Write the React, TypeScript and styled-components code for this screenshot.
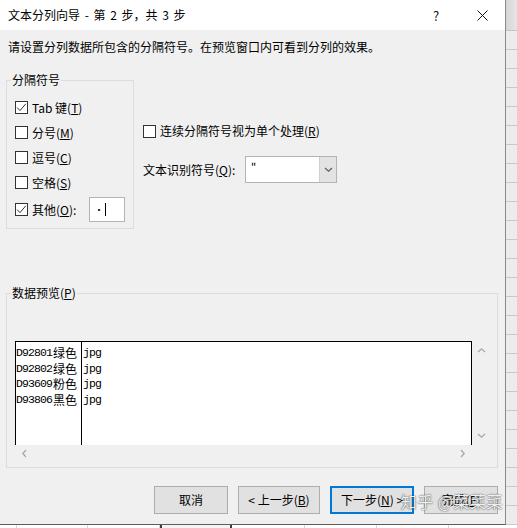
import React from "react";
import styled, { createGlobalStyle } from "styled-components";

const GlobalStyle = createGlobalStyle`
  html, body { margin: 0; padding: 0; background: #ffffff; }
  body {
    font-family: "Noto Sans CJK SC", "Noto Sans", sans-serif;
    font-size: 12px;
    color: #000;
  }
  * { box-sizing: border-box; }
`;

const UI_FONT = `"Noto Sans CJK SC", "Noto Sans", sans-serif`;

const Screen = styled.div`
  width: 517px;
  height: 528px;
  display: flex;
  flex-direction: column;
  overflow: hidden;
`;

const TopArea = styled.div`
  display: flex;
  height: 525px;
`;

const Dialog = styled.div`
  position: relative;
  width: 506px;
  height: 525px;
  display: flex;
  flex-direction: column;
  background: #f0f0f0;
  border-right: 1px solid #8a8a8a;
  border-bottom: 1px solid #5e5e5e;
  font-family: ${UI_FONT};
`;

const TitleBar = styled.div`
  height: 30px;
  flex: 0 0 30px;
  background: #ffffff;
  display: flex;
  align-items: center;
`;

const TitleText = styled.div`
  flex: 1;
  padding-left: 8px;
  line-height: 16px;
  font-size: 12px;
  white-space: pre;
  word-spacing: 2px;
`;

const TitleButton = styled.div`
  width: 46px;
  height: 30px;
  display: flex;
  align-items: center;
  justify-content: center;
  font-size: 13px;
  color: #111;
`;

const Body = styled.div`
  flex: 1;
  display: flex;
  flex-direction: column;
  padding: 0 7px 10px 6px;
`;

const Instruction = styled.div`
  margin: 9px 0 0 2px;
  line-height: 16px;
  white-space: nowrap;
`;

const OptionsRow = styled.div`
  display: flex;
  align-items: flex-start;
  margin-top: 17px;
`;

const Group = styled.fieldset<{ $w?: number }>`
  margin: 0;
  min-width: 0;
  width: ${(p) => (p.$w ? `${p.$w}px` : "auto")};
  border: 1px solid #dcdcdc;
  font-family: ${UI_FONT};
  font-size: 12px;
`;

const DelimGroup = styled(Group)`
  padding: 7px 8px 6px 8px;
`;

const PreviewGroup = styled(Group)`
  margin-top: 56px;
  padding: 40px 7px 6px 8px;
`;

const Legend = styled.legend`
  margin-left: -4px;
  padding: 0 1px;
  line-height: 16px;
  color: #000;
`;

const CheckRow = styled.div<{ $h?: number; $mt?: number }>`
  display: flex;
  align-items: center;
  gap: 4px;
  height: ${(p) => p.$h ?? 25}px;
  margin-top: ${(p) => p.$mt ?? 0}px;
  line-height: 16px;
  white-space: nowrap;
`;

const Box = styled.span`
  width: 13px;
  height: 13px;
  flex: 0 0 13px;
  border: 1px solid #333333;
  background: #ffffff;
  display: flex;
  align-items: center;
  justify-content: center;
`;

const OtherInput = styled.div`
  margin-left: auto;
  width: 36px;
  height: 25px;
  background: #ffffff;
  border: 1px solid #b4b4b4;
  display: flex;
  align-items: center;
  padding-left: 4px;
`;

const InputDot = styled.span`
  font-size: 10px;
  line-height: 10px;
  margin-right: 1px;
`;

const Caret = styled.span`
  width: 1px;
  height: 13px;
  background: #000;
`;

const RightColumn = styled.div`
  margin-left: 9px;
  padding-top: 49px;
  display: flex;
  flex-direction: column;
`;

const QualifierRow = styled.div`
  display: flex;
  align-items: center;
  gap: 10px;
  margin-top: 15px;
`;

const QualLabel = styled.span`
  width: 92px;
  line-height: 16px;
  white-space: nowrap;
`;

const Combo = styled.div`
  width: 92px;
  height: 27px;
  display: flex;
  background: #ffffff;
  border: 1px solid #b4b4b4;
`;

const ComboValue = styled.div`
  flex: 1;
  padding: 4px 0 0 5px;
  font-size: 11px;
  line-height: 11px;
`;

const ComboButton = styled.div`
  width: 17px;
  background: #e3e3e3;
  border-left: 1px solid #cfcfcf;
  display: flex;
  align-items: center;
  justify-content: center;
`;

const ScrollBox = styled.div`
  display: grid;
  grid-template-columns: 1fr 18px;
  grid-template-rows: 104px 16px;
`;

const PreviewContent = styled.div`
  background: #ffffff;
  border: 1px solid #000;
  border-bottom: none;
  display: flex;
`;

const PreviewColumn = styled.div<{ $w?: number; $divider?: boolean }>`
  ${(p) => (p.$w ? `width: ${p.$w}px; flex: 0 0 ${p.$w}px;` : "flex: 1;")}
  ${(p) => (p.$divider ? "border-right: 1px solid #000;" : "")}
  padding: 3px 0 0 ${(p) => (p.$divider ? 0 : 1)}px;
  display: flex;
  flex-direction: column;
`;

const Cell = styled.div`
  height: 15.7px;
  line-height: 15.7px;
  white-space: nowrap;
  display: flex;
  align-items: center;
`;

const Latin = styled.span`
  font-family: "Liberation Mono", "DejaVu Sans Mono", monospace;
  font-size: 11.5px;
  letter-spacing: -0.9px;
`;

const Cjk = styled.span`
  font-family: "Noto Sans CJK SC", sans-serif;
  font-size: 12px;
  margin-left: 1px;
`;

const VScroll = styled.div`
  display: flex;
  flex-direction: column;
  justify-content: space-between;
  align-items: center;
  padding: 5px 0 5px 0;
`;

const HScroll = styled.div`
  display: flex;
  justify-content: space-between;
  align-items: center;
  padding: 0 5px 0 5px;
`;

const ButtonRow = styled.div`
  display: flex;
  justify-content: flex-end;
  gap: 10px;
  margin-top: 18px;
`;

const Button = styled.div<{ $w: number; $primary?: boolean }>`
  width: ${(p) => p.$w}px;
  height: 28px;
  background: #e1e1e1;
  border: ${(p) => (p.$primary ? "2px solid #0078d7" : "1px solid #adadad")};
  display: flex;
  align-items: center;
  justify-content: center;
  line-height: 16px;
  white-space: pre;
`;

const Watermark = styled.div`
  position: absolute;
  right: 2px;
  bottom: 13px;
  font-family: "Noto Sans CJK SC", sans-serif;
  font-size: 16px;
  line-height: 20px;
  color: rgba(255, 255, 255, 0.92);
  text-shadow: 0 0 1px #4a4a4a, 0 0 2px rgba(0, 0, 0, 0.45);
  white-space: pre;
  letter-spacing: 0.5px;
`;

const SheetEdge = styled.div`
  flex: 1;
  display: flex;
  flex-direction: column;
`;

const SheetHeader = styled.div`
  height: 31px;
  background: linear-gradient(to right, #d6d6d6, #e6e6e6);
  border-bottom: 1px solid #c3c3c3;
`;

const SheetRows = styled.div`
  flex: 1;
  background: repeating-linear-gradient(
    to bottom,
    #ececec 0px,
    #ececec 18px,
    #c8c8c8 18px,
    #c8c8c8 19px
  );
`;

const SheetBottom = styled.div`
  height: 3px;
  display: flex;
  background: #ffffff;
`;

const SheetCell = styled.div<{ $w: number; $selected?: boolean }>`
  width: ${(p) => p.$w}px;
  flex: 0 0 ${(p) => p.$w}px;
  border-right: 1px solid #d4d4d4;
  ${(p) =>
    p.$selected
      ? "border-left: 2px solid #3c3c3c; border-right: 2px solid #3c3c3c; background: #f4f4f4;"
      : ""}
`;

const CheckMark = () => (
  <svg width="11" height="11" viewBox="0 0 11 11">
    <polyline
      points="1.2,5.6 4,8.6 9.8,1.8"
      fill="none"
      stroke="#333"
      strokeWidth="1"
    />
  </svg>
);

const CheckBox: React.FC<{ checked?: boolean }> = ({ checked }) => (
  <Box>{checked ? <CheckMark /> : null}</Box>
);

const Chevron: React.FC<{ dir: "up" | "down" | "left" | "right"; color?: string }> = ({
  dir,
  color = "#a8a8a8",
}) => {
  const rot = { down: 0, up: 180, left: 90, right: -90 }[dir];
  return (
    <svg width="9" height="9" viewBox="0 0 9 9" style={{ transform: `rotate(${rot}deg)` }}>
      <polyline points="1,3 4.5,6.2 8,3" fill="none" stroke={color} strokeWidth="1.3" />
    </svg>
  );
};

const rows = [
  { code: "D92801", color: "绿色" },
  { code: "D92802", color: "绿色" },
  { code: "D93609", color: "粉色" },
  { code: "D93806", color: "黑色" },
];

const sheetCells = [17, 71, 72, 72, 73, 72, 72, 72, 72];

export default function App() {
  return (
    <>
      <GlobalStyle />
      <Screen>
        <TopArea>
          <Dialog>
            <TitleBar>
              <TitleText>文本分列向导 - 第 2 步，共 3 步</TitleText>
              <TitleButton>?</TitleButton>
              <TitleButton>
                <svg width="11" height="11" viewBox="0 0 11 11">
                  <path d="M0.5 0.5 L10.5 10.5 M10.5 0.5 L0.5 10.5" stroke="#111" strokeWidth="1" />
                </svg>
              </TitleButton>
            </TitleBar>
            <Body>
              <Instruction>
                请设置分列数据所包含的分隔符号。在预览窗口内可看到分列的效果。
              </Instruction>
              <OptionsRow>
                <DelimGroup $w={128}>
                  <Legend>分隔符号</Legend>
                  <CheckRow>
                    <CheckBox checked />
                    <span>
                      Tab 键(<u>T</u>)
                    </span>
                  </CheckRow>
                  <CheckRow>
                    <CheckBox />
                    <span>
                      分号(<u>M</u>)
                    </span>
                  </CheckRow>
                  <CheckRow>
                    <CheckBox />
                    <span>
                      逗号(<u>C</u>)
                    </span>
                  </CheckRow>
                  <CheckRow>
                    <CheckBox />
                    <span>
                      空格(<u>S</u>)
                    </span>
                  </CheckRow>
                  <CheckRow $mt={2}>
                    <CheckBox checked />
                    <span>
                      其他(<u>O</u>):
                    </span>
                    <OtherInput>
                      <InputDot>·</InputDot>
                      <Caret />
                    </OtherInput>
                  </CheckRow>
                </DelimGroup>
                <RightColumn>
                  <CheckRow $h={20}>
                    <CheckBox />
                    <span>
                      连续分隔符号视为单个处理(<u>R</u>)
                    </span>
                  </CheckRow>
                  <QualifierRow>
                    <QualLabel>
                      文本识别符号(<u>Q</u>):
                    </QualLabel>
                    <Combo>
                      <ComboValue>"</ComboValue>
                      <ComboButton>
                        <Chevron dir="down" color="#606060" />
                      </ComboButton>
                    </Combo>
                  </QualifierRow>
                </RightColumn>
              </OptionsRow>
              <PreviewGroup>
                <Legend>
                  数据预览(<u>P</u>)
                </Legend>
                <ScrollBox>
                  <PreviewContent>
                    <PreviewColumn $w={66} $divider>
                      {rows.map((r) => (
                        <Cell key={r.code}>
                          <Latin>{r.code}</Latin>
                          <Cjk>{r.color}</Cjk>
                        </Cell>
                      ))}
                    </PreviewColumn>
                    <PreviewColumn>
                      {rows.map((r) => (
                        <Cell key={r.code}>
                          <Latin>jpg</Latin>
                        </Cell>
                      ))}
                    </PreviewColumn>
                  </PreviewContent>
                  <VScroll>
                    <Chevron dir="up" />
                    <Chevron dir="down" />
                  </VScroll>
                  <HScroll>
                    <Chevron dir="left" />
                    <Chevron dir="right" />
                  </HScroll>
                  <div />
                </ScrollBox>
              </PreviewGroup>
              <ButtonRow>
                <Button $w={74}>取消</Button>
                <Button $w={82}>
                  {"< 上一步("}
                  <u>B</u>
                  {")"}
                </Button>
                <Button $w={84} $primary>
                  {"下一步("}
                  <u>N</u>
                  {") >"}
                </Button>
                <Button $w={74}>
                  {"完成("}
                  <u>F</u>
                  {")"}
                </Button>
              </ButtonRow>
            </Body>
            <Watermark>知乎 @菜菜菜</Watermark>
          </Dialog>
          <SheetEdge>
            <SheetHeader />
            <SheetRows />
          </SheetEdge>
        </TopArea>
        <SheetBottom>
          {sheetCells.map((w, i) => (
            <SheetCell key={i} $w={w} $selected={i === 3} />
          ))}
        </SheetBottom>
      </Screen>
    </>
  );
}
